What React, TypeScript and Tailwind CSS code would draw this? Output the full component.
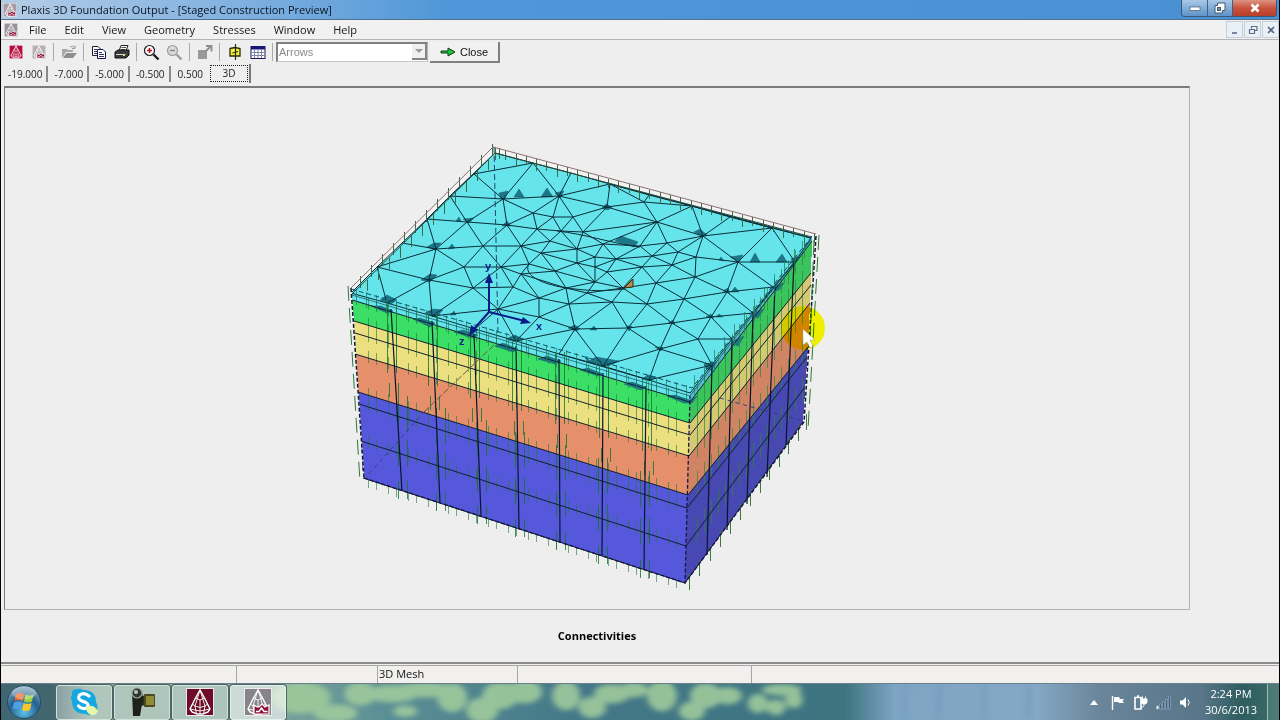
import type { ReactNode } from "react";

type Point = [number, number];

/* ---------- geometry of the soil block ---------- */

const surfaceNodes: Point[] = [
  [495, 153], [811, 238], [690, 393], [351, 293],
  [474, 174], [450, 196], [427, 219], [402, 243], [377, 267],
  [533, 163], [571, 173], [610, 184], [649, 195], [692, 206], [730, 217], [772, 228],
  [795, 262], [773, 287], [753, 313], [732, 339], [712, 365],
  [387, 303], [432, 316], [475, 329], [516, 341], [559, 354], [603, 366], [649, 380],
  [503, 199], [559, 196], [467, 222], [507, 225], [533, 213], [553, 217], [573, 217],
  [537, 229], [561, 231], [436, 249], [483, 246], [521, 246], [550, 241], [541, 253],
  [529, 264], [577, 249], [429, 280], [464, 267], [501, 267], [473, 288], [521, 274],
  [513, 287], [555, 271], [577, 263], [566, 288], [539, 298], [569, 304], [539, 317],
  [498, 309], [575, 329], [607, 207], [644, 202], [657, 222], [703, 236], [583, 232],
  [603, 244], [640, 246], [667, 243], [652, 256], [678, 252], [696, 257], [616, 259],
  [595, 257], [595, 267], [607, 272], [642, 267], [672, 265], [695, 277], [738, 262],
  [595, 282], [623, 288], [656, 283], [727, 292], [587, 293], [612, 302], [647, 304],
  [684, 299], [711, 317], [672, 323], [628, 328], [698, 339], [660, 349],
];

// Screen position to position on the ground plane.
function toPlane([x, y]: Point): Point {
  const dx = x - 495;
  const dy = y - 153;
  const det = 316 * 140 + 144 * 85;
  return [((dx * 140 + dy * 144) / det) * 8, ((316 * dy - 85 * dx) / det) * 6.6];
}

function triangulate(nodes: Point[]): string[] {
  const pts = nodes.map(toPlane);
  pts.push([-60, -50], [70, -50], [4, 90]);
  const n = nodes.length;
  const inCircle = (t: number[], p: Point) => {
    const [a, b, c] = t.map((i) => [pts[i][0] - p[0], pts[i][1] - p[1]]);
    const sq = (v: number[]) => v[0] * v[0] + v[1] * v[1];
    const cross = (v: number[], w: number[]) => v[0] * w[1] - w[0] * v[1];
    const orient = cross([b[0] - a[0], b[1] - a[1]], [c[0] - a[0], c[1] - a[1]]);
    const d = sq(a) * cross(b, c) - sq(b) * cross(a, c) + sq(c) * cross(a, b);
    return orient > 0 ? d > 0 : d < 0;
  };
  let tris: number[][] = [[n, n + 1, n + 2]];
  for (let i = 0; i < n; i++) {
    const bad = tris.filter((t) => inCircle(t, pts[i]));
    const count = new Map<string, number>();
    for (const [a, b, c] of bad) {
      for (const e of [[a, b], [b, c], [c, a]]) {
        const key = [...e].sort((p, q) => p - q).join("-");
        count.set(key, (count.get(key) ?? 0) + 1);
      }
    }
    tris = tris.filter((t) => !bad.includes(t));
    count.forEach((c, key) => {
      if (c === 1) tris.push([...key.split("-").map(Number), i]);
    });
  }
  const edges = new Set<string>();
  for (const t of tris) {
    if (t.some((i) => i >= n)) continue;
    const [a, b, c] = t;
    for (const e of [[a, b], [b, c], [c, a]]) edges.add([...e].sort((p, q) => p - q).join("-"));
  }
  return [...edges].map((key) => {
    const [a, b] = key.split("-").map(Number);
    return `M${nodes[a][0]} ${nodes[a][1]}L${nodes[b][0]} ${nodes[b][1]}`;
  });
}

const meshPath = triangulate(surfaceNodes).join("");

// Each level: left end, front corner, right end.
const levels: [Point, Point, Point][] = [
  [[352, 300], [690, 402], [812, 241]],
  [[354, 321], [690, 423], [811, 273]],
  [[355, 333], [690, 435], [811, 285]],
  [[355, 354], [689, 456], [810, 303]],
  [[358, 392], [688, 495], [808, 347]],
  [[359, 404], [687, 508], [807, 357]],
  [[361, 441], [686, 546], [805, 387]],
  [[363, 478], [685, 583], [803, 422]],
];

const strata = [
  { top: 0, bottom: 1, front: "#3cdf66", side: "#3bc45e" },
  { top: 1, bottom: 3, front: "#ecdf80", side: "#d6c873" },
  { top: 3, bottom: 4, front: "#e5906b", side: "#d08463" },
  { top: 4, bottom: 7, front: "#5558da", side: "#4748b2" },
];

const polygon = (...pts: Point[]) => pts.map((p) => p.join(",")).join(" ");
const lerp = (a: Point, b: Point, t: number): Point => [
  Math.round(a[0] + (b[0] - a[0]) * t),
  Math.round(a[1] + (b[1] - a[1]) * t),
];
const seg = (a: Point, b: Point) => `M${a[0]} ${a[1]}L${b[0]} ${b[1]}`;

const frontTops = [391, 432, 474, 516, 559, 603, 646];
const frontBottoms = [402, 440, 481, 519, 560, 602, 644];
const frontY = (level: number, x: number) => {
  const [l, f] = levels[level];
  return Math.round(l[1] + ((x - l[0]) / (f[0] - l[0])) * (f[1] - l[1]));
};
const sideY = (level: number, x: number) => {
  const [, f, r] = levels[level];
  return Math.round(f[1] + ((x - f[0]) / (r[0] - f[0])) * (r[1] - f[1]));
};

const frontVerticals = frontTops
  .map((x, i) => seg([x, frontY(0, x) - 3], [frontBottoms[i], frontY(7, frontBottoms[i])]))
  .join("");

const sideVerticals = (
  [
    [[712, 365], [707, 555]],
    [[732, 340], [727, 530]],
    [[753, 314], [747, 504]],
    [[775, 287], [767, 477]],
    [[794, 261], [786, 445]],
  ] as [Point, Point][]
)
  .map(([a, b]) => seg(a, b))
  .join("");

const tickXs: number[] = [];
for (let x = 368; x < 688; x += 20) tickXs.push(x, x + 8);

const frontTicks = levels
  .map((_, level) =>
    tickXs
      .map((x) => {
        const y = frontY(level, x);
        return level === 7 ? seg([x, y], [x, y + 8]) : seg([x, y - 7], [x, y + 5]);
      })
      .join("")
  )
  .join("");

const frontLong = frontTops
  .map((x, i) => {
    const b = frontBottoms[i];
    return [-4, 5]
      .map(
        (d) =>
          seg([x + d, frontY(0, x) - 12], [x + d + 1, frontY(3, x) + 8]) +
          seg([x + d + 2, frontY(3, x) + 18], [x + d + 2, frontY(3, x) + 32]) +
          seg([b + d, frontY(4, b) - 10], [b + d, frontY(4, b) + 26]) +
          seg([b + d, frontY(6, b) - 14], [b + d, frontY(6, b) + 12]) +
          seg([b + d, frontY(7, b) - 10], [b + d, frontY(7, b) + 8])
      )
      .join("");
  })
  .join("");

const sideTicks = [0, 1, 2, 3, 4, 6]
  .map((level) => {
    let d = "";
    for (let x = 697; x < 806; x += 7) {
      const y = sideY(level, x);
      d += seg([x, y - 13], [x, y + 11]);
    }
    return d;
  })
  .join("");

const sideBottomTicks = [689, 699, 710, 720, 730, 740, 750, 760, 769, 779, 788, 798, 806]
  .map((x) => seg([x, Math.min(sideY(7, x), 580) - 4], [x, sideY(7, x) + 12]))
  .join("");

const rimBack: string[] = [];
for (let i = 0; i <= 31; i++) {
  const [x, y] = lerp([495, 148], [814, 234], i / 31);
  rimBack.push(seg([x, y], [x, y + (i % 2 ? 9 : 12)]));
}
const rimLeft: string[] = [];
for (let i = 0; i <= 12; i++) {
  const [x, y] = lerp([360, 282], [492, 150], i / 12);
  rimLeft.push(seg([x, y - 6], [x, y + 6]), seg([x + 7, y - 2], [x + 7, y + 9]));
}
const rimFront: string[] = [];
for (let x = 356; x < 690; x += 10) {
  const y = Math.round(289 + ((x - 351) / 341) * 99);
  rimFront.push(seg([x, y - 1], [x, y + 15]));
}
const rimSide: string[] = [];
for (let x = 694; x < 814; x += 10) {
  const y = Math.round(390 - ((x - 690) / 122) * 154);
  rimSide.push(seg([x, y - 10], [x, y + 12]));
}

const darkPatches = [
  "499,193 508,191 505,199 501,199", "514,197 519,189 524,197", "541,197 547,188 553,197", "555,193 564,191 560,198",
  "463,219 474,218 469,223", "456,221 459,217 461,221", "502,226 507,221 511,226", "427,247 434,243 441,243 435,250",
  "448,249 452,244 455,248", "421,280 430,274 437,275 430,282", "380,300 387,295 397,300 391,304",
  "371,306 381,306 393,311 387,313", "425,313 433,309 443,310 436,317", "450,315 454,311 456,315",
  "413,319 420,318 435,323 430,327", "454,332 463,330 478,335 472,338", "506,339 515,335 523,339 516,342",
  "495,346 503,343 518,349 513,352", "538,359 547,356 561,361 555,364", "587,362 596,357 619,361 608,366",
  "580,370 588,368 603,374 598,376", "585,358 588,357 589,362", "624,384 632,382 646,387 641,390",
  "642,379 648,375 656,377 650,381", "667,396 675,395 690,400 697,396 692,403 684,403",
  "615,241 621,236 638,242 634,247", "602,208 606,204 612,207 608,210", "694,232 700,229 707,235 702,236",
  "730,257 743,255 739,262", "750,262 755,253 760,262", "776,262 782,254 787,262", "791,259 799,256 794,265",
  "719,260 721,257 724,261", "723,291 728,288 730,293", "731,292 735,287 739,292", "716,317 719,314 723,317",
  "706,317 711,314 714,318", "568,328 575,325 580,329 576,331", "590,330 594,326 597,330", "626,326 632,326 629,331",
  "655,347 663,347 661,351", "704,364 717,362 712,370 706,369", "735,340 744,336 738,346 732,343",
  "755,312 764,309 758,318 753,317", "774,286 784,283 779,290 774,291", "668,323 673,320 675,324",
];

function SoilModel() {
  return (
    <svg viewBox="5 88 1184 521" role="img" aria-label="3D mesh" className="block h-[521px] w-full">
      <g shapeRendering="crispEdges">
        <polygon points="495,147 816,234 811,241 692,398 351,296 350,288" fill="#f3f3f3" />
        <polygon points="495,153 812,237 690,403 352,300 351,293" fill="#65e5eb" />
        {strata.map((s) => {
          const a = levels[s.top];
          const b = levels[s.bottom];
          return (
            <g key={s.front}>
              <polygon points={polygon(a[0], a[1], b[1], b[0])} fill={s.front} />
              <polygon points={polygon(a[1], a[2], b[2], b[1])} fill={s.side} />
            </g>
          );
        })}
        <polygon points="690,403 812,241 812,237 690,394" fill="#55bfd0" />
      </g>

      <g fill="#1c7788" stroke="#155e70" strokeWidth="0.5">
        {darkPatches.map((p) => (
          <polygon key={p} points={p} />
        ))}
      </g>

      <g fill="none" strokeWidth="1">
        <path d={meshPath} stroke="#0a2c3a" />
        <path
          d="M557 231C585 234 610 243 640 247M529 264C522 276 545 286 575 289C600 292 612 290 625 289"
          stroke="#0a2c3a"
        />
        <path d={frontTicks} stroke="#1d7a3c" shapeRendering="crispEdges" opacity="0.6" />
        <path d={frontLong} stroke="#14742e" shapeRendering="crispEdges" opacity="0.8" />
        <path d={sideTicks} stroke="#2a8a35" shapeRendering="crispEdges" opacity="0.7" />
        <path d={sideBottomTicks} stroke="#3c7a3c" shapeRendering="crispEdges" />
        {levels.map(([l, f, r]) => (
          <path key={f[1]} d={`M${l[0]} ${l[1]}L${f[0]} ${f[1]}L${r[0]} ${r[1]}`} stroke="#10202c" />
        ))}
        <path d={frontVerticals} stroke="#0b1430" strokeWidth="1.2" />
        <path d={sideVerticals} stroke="#0b1430" strokeWidth="1.2" />

        <path d={rimBack.join("") + rimLeft.join("")} stroke="#3d6b45" shapeRendering="crispEdges" />
        <path d={rimFront.join("") + rimSide.join("")} stroke="#1f8060" shapeRendering="crispEdges" opacity="0.75" />
        <path d="M351 288L493 147L816 234" stroke="#8a6f6f" />
        <path d="M351 295L495 153L812 237" stroke="#2b4a3c" />
        <path d="M351 289L692 388L812 236" stroke="#12506a" strokeDasharray="5 3" />
        <path d="M352 295L690 396L811 240" stroke="#1a5a6a" strokeWidth="0.8" />

        <path d="M351 288L364 478M816 236L804 422" stroke="#ffffff" />
        <path d="M351 288L364 478M816 236L804 422" stroke="#151530" strokeDasharray="4 2" strokeWidth="1.5" />
        <path d="M364 478L685 583L690 396M804 422L685 583" stroke="#151545" strokeDasharray="4 2" strokeWidth="1.3" />
        <path d="M348 286L360 482M819 235L808 430M814 240L810 345" stroke="#2a7a35" strokeDasharray="15 7" />
        <path d="M494 147L498 334" stroke="#1c4a78" strokeDasharray="6 3" />
        <path d="M494 345L425 411" stroke="#6b5a40" strokeDasharray="7 2" />
        <path d="M425 411L366 477M720 398L755 408L800 420" stroke="#3a3a80" strokeDasharray="4 4" />
        <polygon points="624,288 633,279 633,287" fill="#b08a55" stroke="#3a2a10" />
      </g>

      <g stroke="#0b1c86" fill="#0b1c86">
        <path d="M489 312V276M489 312L525 321M489 312L473 330" strokeWidth="2" fill="none" />
        <polygon points="489,273 485,283 493,283" stroke="none" />
        <polygon points="531,323 520,324 523,317" stroke="none" />
        <polygon points="469,336 471,325 478,330" stroke="none" />
      </g>
      <g fill="#0b1c86" className="font-['Liberation_Sans',sans-serif] text-[11px] font-bold">
        <text x="485" y="270">y</text>
        <text x="536" y="330">x</text>
        <text x="459" y="345">z</text>
      </g>

      <circle cx="803" cy="328" r="22" fill="#ffff00" className="mix-blend-multiply" />
      <polygon points="803,329 803,345 807,342 810,348 813,346 810,340 815,340" fill="#ffffff" stroke="#a0a090" strokeWidth="0.5" />
    </svg>
  );
}

/* ---------- icons ---------- */

function PlaxisIcon({ bg, badge = false, line = "#ffffff", className }: { bg: string; badge?: boolean; line?: string; className: string }) {
  return (
    <svg viewBox="0 0 28 28" className={className} aria-hidden="true">
      <rect x="0.5" y="0.5" width="27" height="27" fill={bg} stroke="#f4e8ea" />
      <path d="M14 2L9.500 10L4 21L6 24L11 26H17L22 24L24 21L18.500 10Z" fill="none" stroke={line} strokeWidth="1.400" />
      <path d="M14 2L11.500 10L9 18L10.500 26M14 2L16.500 10L19 18L17.500 26M9.500 10L14 12L18.500 10M6.500 16L9 18L14 19.500L19 18L21.500 16M14 12V26M4 21L9 22L14 23L19 22L24 21" fill="none" stroke={line} strokeWidth="0.900" />
      {badge && <path d="M10 26V17L13 19H15L18 16L21 19L25 17V26Z" fill="#8c1238" stroke="#ffffff" strokeWidth="1.200" />}
      {badge && <path d="M12 23.500H15L17.500 20L20 23.500H23.500" fill="none" stroke="#ffffff" strokeWidth="1.400" />}
    </svg>
  );
}

function FolderIcon() {
  return (
    <svg viewBox="0 0 18 16" className="h-4 w-[18px]" aria-hidden="true">
      <path d="M2 14V5H7L8 6H13V8H6Z" fill="#a8a8a8" />
      <path d="M3 14L6.500 9H17L13 14Z" fill="#8e8e8e" />
      <path d="M10 3Q13 1 15 4M15 1.500V4.500H12" fill="none" stroke="#9a9a9a" />
    </svg>
  );
}

function CopyIcon() {
  return (
    <svg viewBox="0 0 16 16" className="size-4" aria-hidden="true">
      <path d="M1.500 2.500H7L9.500 5V11.500H1.500Z" fill="#fff" stroke="#1c1c2c" />
      <path d="M3 5.500H6M3 7.500H6M3 9.500H6" stroke="#33335a" />
      <path d="M6.500 5.500H12L14.500 8V14.500H6.500Z" fill="#fff" stroke="#141450" />
      <path d="M8 8.500H11M8 10.500H13M8 12.500H13" stroke="#33335a" />
    </svg>
  );
}

function PrinterIcon() {
  return (
    <svg viewBox="0 0 16 16" className="size-4" aria-hidden="true">
      <path d="M5 7L7 1.500H14L12 7Z" fill="#fff" stroke="#222" />
      <path d="M7.500 3.500H12M7 5.500H11" stroke="#555" />
      <path d="M1 8L4 6H15V11L12 14H1Z" fill="#3a3a3a" stroke="#111" />
      <path d="M2 10.500H11.500" stroke="#d8d8c8" />
      <rect x="9" y="11" width="2" height="1" fill="#e8d840" />
    </svg>
  );
}

function MagnifierIcon({ active }: { active: boolean }) {
  const dark = active ? "#1b1b1b" : "#9c9c9c";
  return (
    <svg viewBox="0 0 17 17" className="size-[17px]" aria-hidden="true">
      <circle cx="6.500" cy="6.500" r="5" fill={active ? "#fff" : "#dcdcdc"} stroke={dark} strokeWidth="1.200" />
      <path d={active ? "M4 6.500H9M6.500 4V9" : "M4 6.500H9"} stroke={active ? "#c01020" : "#8c8c8c"} strokeWidth="1.600" />
      <path d="M10.500 10.500L15.500 15.500" stroke={dark} strokeWidth="2.400" />
    </svg>
  );
}

function ResizeIcon() {
  return (
    <svg viewBox="0 0 16 16" className="size-4" aria-hidden="true">
      <rect x="1" y="6" width="9" height="9" fill="#999" />
      <path d="M8 8L13 3M9 2H14.500V7.500" fill="none" stroke="#8c8c8c" strokeWidth="1.800" />
    </svg>
  );
}

function SectionIcon() {
  return (
    <svg viewBox="0 0 16 16" className="size-4" aria-hidden="true">
      <path d="M3 4.500L8 3.500L13 4.500V12H3Z" fill="#f2ee3c" stroke="#2a2a08" strokeWidth="1.300" />
      <path d="M8.500 0V16M5.500 9L11 7.500" stroke="#2a2a08" strokeWidth="1.200" />
    </svg>
  );
}

function TableIcon() {
  return (
    <svg viewBox="0 0 16 16" className="size-4" aria-hidden="true">
      <rect x="1" y="2.500" width="14" height="12" fill="#fff" stroke="#16165c" />
      <rect x="1" y="2" width="14" height="3.500" fill="#16167a" />
      <path d="M1 8.500H15M1 11.500H15M4.500 5V14M8 5V14M11.500 5V14" stroke="#8484a8" />
    </svg>
  );
}

/* ---------- window parts ---------- */

function TitleBar() {
  return (
    <header className="flex h-5 items-center justify-between border-b border-[#50708e] bg-linear-to-r from-[#b4cde6] via-[#4f97d8] via-35% to-[#4a90d4] pr-[2px] pl-[2px]">
      <div className="flex items-center gap-1">
        <PlaxisIcon bg="#a89ca4" badge className="size-3.5" />
        <h1 className="text-[11px] leading-4 text-[#0c1420]">Plaxis 3D Foundation Output - [Staged Construction Preview]</h1>
      </div>
      <div className="flex h-[17px] self-start overflow-hidden rounded-b-[4px] border border-t-0 border-[#3a5878]">
        <button aria-label="Minimize" className="flex w-[26px] items-center justify-center border-r border-[#3f6187] bg-linear-to-b from-[#a9c8e6] to-[#5d93c8]">
          <svg viewBox="0 0 12 10" className="h-[10px] w-3"><rect x="1" y="4" width="10" height="3.500" fill="#fff" stroke="#43566e" strokeWidth="0.7" /></svg>
        </button>
        <button aria-label="Restore" className="flex w-[25px] items-center justify-center border-r border-[#3f6187] bg-linear-to-b from-[#a9c8e6] to-[#5d93c8]">
          <svg viewBox="0 0 12 12" className="size-3">
            <path d="M3.500 1H11V8.500H8.500V11H1V3.500H3.500Z" fill="#fff" stroke="#43566e" />
            <rect x="3.500" y="5.500" width="3" height="3" fill="#6d98c4" stroke="#43566e" />
          </svg>
        </button>
        <button aria-label="Close window" className="flex w-[43px] items-center justify-center bg-linear-to-b from-[#dd9384] via-[#c9523d] to-[#b8402a]">
          <svg viewBox="0 0 12 10" className="h-[10px] w-3"><path d="M2.500 1.500L9.500 8.500M9.500 1.500L2.500 8.500" stroke="#fff" strokeWidth="2.600" /></svg>
        </button>
      </div>
    </header>
  );
}

const menus = ["File", "Edit", "View", "Geometry", "Stresses", "Window", "Help"];

function MenuBar() {
  const small = "flex h-[17px] w-[17px] items-center justify-center border border-[#c3cfdb] bg-[#e9f0f6]";
  return (
    <nav aria-label="Main menu" className="flex h-5 items-center justify-between border-b border-[#b4b4b4] bg-[#f1f1f1] pl-[3px]">
      <div className="flex items-center">
        <PlaxisIcon bg="#98949a" badge className="mr-[2px] size-[14px]" />
        {menus.map((m) => (
          <button key={m} className="px-[9px] text-[11px] leading-[18px] text-[#161616]">{m}</button>
        ))}
      </div>
      <div className="flex gap-px">
        <button aria-label="Minimize document" className={small}>
          <svg viewBox="0 0 10 10" className="size-2.5"><path d="M2 8H7" stroke="#4d6480" strokeWidth="1.500" /></svg>
        </button>
        <button aria-label="Restore document" className={small}>
          <svg viewBox="0 0 10 10" className="size-2.5"><path d="M3.500 3.500V1.500H9V5.500H7M1.500 4.500H6.500V8.500H1.500Z" fill="none" stroke="#5b7088" strokeWidth="1.200" /></svg>
        </button>
        <button aria-label="Close document" className={small}>
          <svg viewBox="0 0 10 10" className="size-2.5"><path d="M2 2L8 8M8 2L2 8" stroke="#53677f" strokeWidth="1.700" /></svg>
        </button>
      </div>
    </nav>
  );
}

function Tool({ label, disabled, children }: { label: string; disabled?: boolean; children: ReactNode }) {
  return (
    <button aria-label={label} disabled={disabled} className="flex h-5 w-[23px] items-center justify-center">
      {children}
    </button>
  );
}

function Separator() {
  return (
    <span className="flex w-[7px] justify-center">
      <span className="h-[18px] w-px bg-[#a9a9a9]" />
    </span>
  );
}

function Toolbar() {
  return (
    <div role="toolbar" aria-label="Tools" className="flex h-6 items-center pl-[3px]">
      <Tool label="Input program"><PlaxisIcon bg="#b80c3c" className="size-[14px]" /></Tool>
      <Tool label="Output program" disabled><PlaxisIcon bg="#b4b0b2" badge className="size-[14px]" /></Tool>
      <Separator />
      <Tool label="Open" disabled><FolderIcon /></Tool>
      <Separator />
      <Tool label="Copy"><CopyIcon /></Tool>
      <Tool label="Print"><PrinterIcon /></Tool>
      <Separator />
      <Tool label="Zoom in"><MagnifierIcon active /></Tool>
      <Tool label="Zoom out" disabled><MagnifierIcon active={false} /></Tool>
      <Separator />
      <Tool label="Resize" disabled><ResizeIcon /></Tool>
      <Separator />
      <Tool label="Cross section"><SectionIcon /></Tool>
      <Tool label="Table"><TableIcon /></Tool>
      <Separator />
      <div className="relative">
        <select aria-label="Presentation" disabled className="block h-5 w-[152px] appearance-none border border-t-2 border-l-2 border-[#808080] border-r-[#b8b8b8] border-b-[#c8c8c8] bg-white pb-[2px] pl-[1px] font-['Liberation_Sans',sans-serif] text-[11px] leading-4 text-[#8a8a8a] opacity-100">
          <option>Arrows</option>
        </select>
        <span className="pointer-events-none absolute top-[2px] right-[1px] flex h-4 w-[15px] items-center justify-center border-r-2 border-b-2 border-[#858585] bg-[#f0f0f0]">
          <svg viewBox="0 0 8 4" className="h-1 w-2"><path d="M0 0H8L4 4Z" fill="#999" /></svg>
        </span>
      </div>
      <button className="ml-[2px] flex h-[21px] w-[70px] items-center justify-center gap-1 border-r-2 border-b-2 border-[#808080] bg-[#f1f1f1] pt-[2px] font-['Liberation_Sans',sans-serif] text-[11px] text-[#111]">
        <svg viewBox="0 0 16 10" className="h-2.5 w-4" aria-hidden="true">
          <path d="M1 4H8V1L15 5L8 9V6H1Z" fill="#1fc43a" stroke="#123c14" />
        </svg>
        Close
      </button>
    </div>
  );
}

const elevations = ["-19.000", "-7.000", "-5.000", "-0.500", "0.500"];

function LevelTabs() {
  return (
    <div role="tablist" aria-label="Planes" className="flex h-[22px] items-center pb-[3px] pl-[3px] text-[10px] text-[#222]">
      {elevations.map((v, i) => (
        <button
          key={v}
          role="tab"
          aria-selected="false"
          className={i === elevations.length - 1 ? "h-4 px-[7px] leading-[14px]" : "h-4 border-r-2 border-[#8a8a8a] pr-[4px] pl-[4px] leading-[14px] not-first:pl-[6px]"}
        >
          {v}
        </button>
      ))}
      <button role="tab" aria-selected="true" className="h-[19px] border-r-2 border-[#777] pr-[1px]">
        <span className="flex h-[17px] w-[38px] items-center justify-center border border-dotted border-[#222]">3D</span>
      </button>
    </div>
  );
}

function StatusBar() {
  const cell = "border-t border-l border-[#a6a6a6] h-[18px]";
  return (
    <footer className="border-t-2 border-[#8a8a8a] bg-[#f1f0ef] pt-px">
      <div className="flex text-[11px] leading-4 text-[#111]">
        <div className="h-[18px] w-[235px] border-t border-[#a6a6a6]" />
        <div className={`${cell} w-[141px]`} />
        <div className={`${cell} w-[140px] pl-px`}>3D Mesh</div>
        <div className={`${cell} w-[234px]`} />
        <div className={`${cell} flex-1`} />
      </div>
    </footer>
  );
}

const leafSpots = [
  [300, 14, 30, 16], [335, 30, 22, 9], [360, 10, 16, 12], [392, 10, 26, 9], [405, 28, 12, 6], [425, 6, 30, 8],
  [452, 14, 15, 15], [482, 27, 16, 13], [500, 12, 18, 14], [524, 8, 18, 12], [566, 12, 14, 15], [592, 24, 14, 11],
  [612, 10, 18, 10], [634, 6, 14, 8], [662, 12, 15, 16], [692, 28, 13, 10], [706, 12, 16, 13], [728, 12, 14, 9],
  [758, 20, 10, 10], [776, 24, 10, 8], [782, 6, 20, 6], [794, 16, 9, 9],
];

function Taskbar() {
  const task = "flex h-[35px] w-14 items-center justify-center rounded-[3px] border border-[#d2e2da] bg-white/35 shadow-[0_0_0_1px_#4c6464]";
  return (
    <div className="relative flex h-[37px] items-center justify-between overflow-hidden border-t border-[#6a7f86] bg-[#467a8a]">
      <svg viewBox="0 0 1280 37" preserveAspectRatio="none" className="absolute inset-0 h-full w-full" aria-hidden="true">
        <defs>
          <filter id="soft" x="-5%" y="-50%" width="110%" height="200%"><feGaussianBlur stdDeviation="3" /></filter>
          <linearGradient id="sky" x1="0" x2="1">
            <stop offset="0" stopColor="#3f6672" />
            <stop offset="0.04" stopColor="#42666e" />
            <stop offset="0.07" stopColor="#86a898" />
            <stop offset="0.2" stopColor="#7fa69a" />
            <stop offset="0.3" stopColor="#5b8f96" />
            <stop offset="0.45" stopColor="#447888" />
            <stop offset="0.66" stopColor="#3d7480" />
            <stop offset="0.7" stopColor="#7fa5c4" />
            <stop offset="0.81" stopColor="#84a8c6" />
            <stop offset="0.86" stopColor="#6a859a" />
            <stop offset="0.94" stopColor="#587688" />
            <stop offset="0.97" stopColor="#2f5d60" />
            <stop offset="1" stopColor="#3a6c68" />
          </linearGradient>
        </defs>
        <rect width="1280" height="37" fill="url(#sky)" />
        <g filter="url(#soft)" fill="#9fca9c" opacity="0.9">
          {leafSpots.map(([x, y, rx, ry]) => (
            <ellipse key={x} cx={x} cy={y} rx={rx} ry={ry} />
          ))}
        </g>
        <g filter="url(#soft)" stroke="#6f97b8" strokeWidth="6">
          <path d="M905 0L904 37M940 0L939 37M985 0L984 37M1030 0L1029 37" opacity="0.5" />
        </g>
      </svg>

      <div className="relative flex items-center gap-[2px] pl-[5px]">
        <button aria-label="Start" className="mr-3">
          <svg viewBox="0 0 36 36" className="size-9" aria-hidden="true">
            <defs>
              <radialGradient id="orb" cx="0.5" cy="0.8" r="0.8">
                <stop offset="0" stopColor="#5cc4e8" />
                <stop offset="0.55" stopColor="#24608f" />
                <stop offset="1" stopColor="#8fb0c0" />
              </radialGradient>
            </defs>
            <circle cx="18" cy="18" r="16.500" fill="url(#orb)" stroke="#274a60" />
            <path d="M10 10Q14 8 18 10L16.500 17Q12.500 15 8.500 17Z" fill="#ee6a2c" />
            <path d="M19.500 10.500Q23 12.500 27.500 10.500L26 17.500Q22 19.500 18 17.500Z" fill="#9fcf3c" />
            <path d="M8 18.500Q12 16.500 16 18.500L14.500 25.500Q10.500 23.500 6.500 25.500Z" fill="#4f9fe4" />
            <path d="M17.500 19Q21.500 21 25.500 19L24 26Q20 28 16 26Z" fill="#fbc52c" />
            <ellipse cx="18" cy="9" rx="12" ry="6.500" fill="#fff" opacity="0.3" />
          </svg>
        </button>
        <button aria-label="Skype" className={task}>
          <svg viewBox="0 0 30 30" className="size-[30px]" aria-hidden="true">
            <path d="M3 8Q2 2 8 2Q11 1 14 3Q27 3 27 15Q30 20 27 26Q22 30 17 27Q3 27 3 14Q1 11 3 8Z" fill="#14a8e2" />
            <path d="M20 9Q15 5 10.500 8Q8 12 13 14L17 15.500Q21 18 17.500 21Q13 23 9.500 19" fill="none" stroke="#fff" strokeWidth="3.200" strokeLinecap="round" />
            <path d="M17 20Q24 16 29 24Q27 29 22 28Q17 26 17 20Z" fill="#e6f5a8" />
          </svg>
        </button>
        <button aria-label="Camera recorder" className={task}>
          <svg viewBox="0 0 30 32" className="h-8 w-[30px]" aria-hidden="true">
            <path d="M14 11L18 9V19L14 20Z" fill="#2c2f1c" />
            <rect x="17" y="8" width="11" height="13" rx="1" fill="#4c4a20" />
            <rect x="19" y="10" width="8" height="9" fill="#8f8e34" />
            <path d="M5 6Q10 0 15 6L16 12L13 30H6Z" fill="#1d211c" />
            <circle cx="10" cy="7" r="5" fill="#2f352f" stroke="#9ca89c" strokeWidth="1.200" />
            <circle cx="9" cy="6" r="2" fill="#b9c6c0" />
          </svg>
        </button>
        <button aria-label="Plaxis Input" className={task}>
          <PlaxisIcon bg="#6c0c28" className="size-7" />
        </button>
        <button aria-label="Plaxis Output" className="flex h-[35px] w-14 items-center justify-center rounded-[3px] border border-[#e6f0ea] bg-white/60 shadow-[0_0_0_1px_#4c6464]">
          <PlaxisIcon bg="#86868a" badge className="size-7" />
        </button>
      </div>

      <div className="relative flex h-full items-center text-white">
        <div className="flex items-center gap-2">
          <button aria-label="Show hidden icons"><svg viewBox="0 0 8 5" className="h-[5px] w-2"><path d="M0 5L4 0L8 5Z" fill="#fff" /></svg></button>
          <button aria-label="Action Center" className="ml-1">
            <svg viewBox="0 0 15 15" className="size-[15px]"><path d="M2.500 1V15" stroke="#fff" strokeWidth="1.400" /><path d="M4 2H9L10 4H14L12.500 6L14 8H9L8 7H4Z" fill="#fff" /></svg>
          </button>
          <button aria-label="Power">
            <svg viewBox="0 0 15 15" className="size-[15px]">
              <path d="M2 2.500H8V14H2ZM4 1H6" fill="none" stroke="#fff" strokeWidth="1.600" />
              <path d="M8 4H14V7Q14 9 11.500 9Q8 9 8 7ZM9.500 1.500V4M12.500 1.500V4" fill="#fff" stroke="#fff" />
              <path d="M11 9Q11 13 8 12" fill="none" stroke="#fff" />
            </svg>
          </button>
          <button aria-label="Network">
            <svg viewBox="0 0 15 15" className="size-[15px]" fill="#405f7c" stroke="#9ab0c4" strokeWidth="0.6">
              <rect x="0.500" y="11" width="2" height="3" fill="#fff" /><rect x="3.500" y="9" width="2" height="5" /><rect x="6.500" y="7" width="2" height="7" /><rect x="9.500" y="4.500" width="2" height="9.500" /><rect x="12.500" y="2" width="2" height="12" />
            </svg>
          </button>
          <button aria-label="Volume">
            <svg viewBox="0 0 13 13" className="size-[13px]"><path d="M1 4.500H3.500L7 1V12L3.500 8.500H1Z" fill="#fff" /><path d="M9 3.500Q11.500 6.500 9 9.500" fill="none" stroke="#fff" /></svg>
          </button>
        </div>
        <time dateTime="2013-06-30T14:24" className="ml-3 w-[54px] text-center text-[11px] leading-4 whitespace-nowrap">
          2:24 PM
          <br />
          30/6/2013
        </time>
        <button aria-label="Show desktop" className="ml-[9px] h-full w-3 border-l border-[#9ebbb6] bg-white/10" />
      </div>
    </div>
  );
}

export default function App() {
  return (
    <div className="flex min-h-screen flex-col border-x border-black bg-[#eeeeee] font-['Open_Sans','Noto_Sans',sans-serif]">
      <TitleBar />
      <MenuBar />
      <Toolbar />
      <LevelTabs />
      <main className="flex-1">
        <figure className="mr-[89px] ml-[3px]">
          <div className="border border-t-2 border-[#b2b2b2] border-t-[#7a7a7a] border-l-[#7a7a7a]">
            <SoilModel />
          </div>
          <figcaption className="py-[19px] text-center text-[11px] leading-[14px] font-bold text-black">Connectivities</figcaption>
        </figure>
      </main>
      <StatusBar />
      <Taskbar />
    </div>
  );
}
